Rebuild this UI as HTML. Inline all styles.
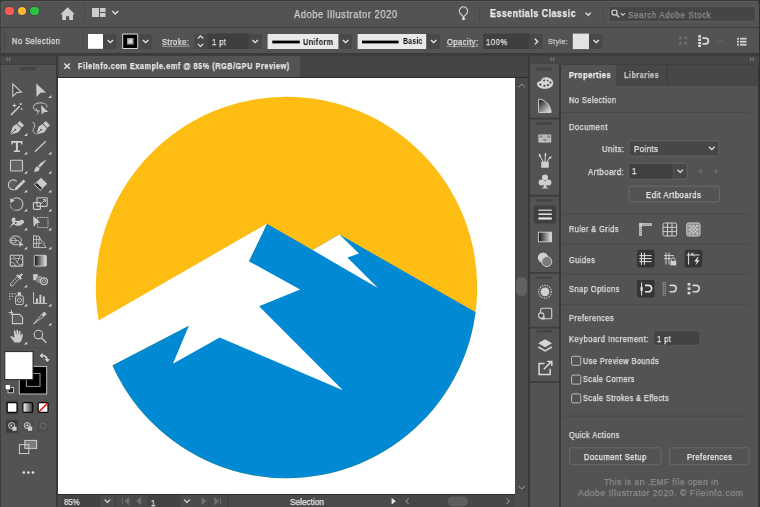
<!DOCTYPE html>
<html><head><meta charset="utf-8">
<style>
*{box-sizing:border-box;margin:0;padding:0}
html,body{width:760px;height:507px;overflow:hidden}
body{position:relative;background:#393939;font-family:"Liberation Sans",sans-serif;color:#d4d4d4}
.a{position:absolute}
.t{position:absolute;white-space:nowrap;line-height:1;will-change:transform;-webkit-text-stroke:0.25px currentColor}
svg{position:absolute;overflow:visible}
</style></head><body>
<!-- title bar -->
<div class="a" style="left:1px;top:1px;width:758px;height:26px;background:#535353;border-top-left-radius:4px;border-top-right-radius:4px;box-shadow:inset 1px 1px 0 #5d5d5d"></div>
<div class="a" style="left:0;top:27px;width:760px;height:1px;background:#3d3d3d"></div>

<!-- traffic lights -->
<div class="a" style="left:5px;top:6.6px;width:8.8px;height:8.8px;border-radius:50%;background:#fd5b53;box-shadow:0 0 0 0.6px #3f4f4f"></div>
<div class="a" style="left:17.6px;top:6.6px;width:8.8px;height:8.8px;border-radius:50%;background:#fdbb2b;box-shadow:0 0 0 0.6px #3c4560"></div>
<div class="a" style="left:30.2px;top:6.6px;width:8.8px;height:8.8px;border-radius:50%;background:#28c63e;box-shadow:0 0 0 0.6px #4a3f55"></div>
<!-- home -->
<svg style="left:0;top:0" width="760" height="28">
<path d="M60.5 14.2 L67.6 7.2 L74.8 14.2 L73 14.2 L73 20 L69.2 20 L69.2 16.2 L66 16.2 L66 20 L62.2 20 L62.2 14.2 Z" fill="#cdcdcd"/>
<rect x="84" y="5" width="1" height="16" fill="#484848"/>
<rect x="92" y="8" width="7" height="9" fill="#cdcdcd"/>
<rect x="100" y="8" width="5.5" height="4" fill="#cdcdcd"/>
<rect x="100" y="13" width="5.5" height="4" fill="#cdcdcd"/>
<path d="M112.3 11 L115.3 14 L118.3 11" stroke="#e0e0e0" stroke-width="1.3" fill="none"/>
<path d="M463.5 16.9 L460.6 13.9 A4.1 4.1 0 1 1 466.4 13.9 Z" stroke="#d2d2d2" stroke-width="1.25" fill="none" stroke-linejoin="round"/>
<circle cx="463.5" cy="18.6" r="1.6" fill="#dadada"/>
<rect x="479" y="6" width="1" height="15" fill="#484848"/>
<path d="M585.5 12.6 L588.2 15.3 L590.9 12.6" stroke="#e6e6e6" stroke-width="1.3" fill="none"/>
<rect x="603" y="6" width="1" height="15" fill="#484848"/>
<rect x="608.9" y="6.4" width="146.6" height="15" rx="2.5" fill="#454545" stroke="#5c5c5c" stroke-width="1"/>
<circle cx="614.5" cy="12.6" r="2.6" stroke="#d6d6d6" stroke-width="1.2" fill="none"/>
<path d="M616.4 14.5 L619.2 17.3" stroke="#d6d6d6" stroke-width="1.4"/>
<path d="M620.8 13.2 L622.9 15.3 L625 13.2" stroke="#d6d6d6" stroke-width="1.1" fill="none"/>
</svg>
<div class="t" style="left:294px;top:8.7px;font-size:10.6px;color:#d2d2d2;letter-spacing:0.64px;transform:scaleX(0.88);transform-origin:0 0">Adobe Illustrator 2020</div>
<div class="t" style="left:489.8px;top:8.1px;font-size:10.8px;font-weight:bold;color:#ebebeb;letter-spacing:0.6px;transform:scaleX(0.82);transform-origin:0 0">Essentials Classic</div>
<div class="t" style="left:628px;top:10.5px;font-size:9.2px;color:#8e8e8e;letter-spacing:0.63px;transform:scaleX(0.88);transform-origin:0 0">Search Adobe Stock</div>

<!-- control bar -->
<div class="a" style="left:0;top:28px;width:760px;height:25px;background:#535353"></div>
<div class="a" style="left:0;top:53.5px;width:760px;height:2px;background:#3d3d3d"></div>

<svg style="left:0;top:0" width="760" height="56">
<!-- grip -->
<path d="M4.5 33 V48.5" stroke="#464646" stroke-width="1.4" stroke-dasharray="1 0.5"/>
<rect x="83" y="31" width="0.8" height="20" fill="#4c4c4c"/>
<!-- fill swatch group -->
<rect x="87.2" y="33.2" width="30" height="16.2" rx="2" fill="#484848" stroke="#585858" stroke-width="0.7"/>
<rect x="88" y="34" width="15" height="14.8" fill="#ffffff"/>
<path d="M107.6 40 L110.3 42.7 L113 40" stroke="#ececec" stroke-width="1.3" fill="none"/>
<!-- stroke swatch group -->
<rect x="121.6" y="33.2" width="30.6" height="16.2" rx="2" fill="#484848" stroke="#585858" stroke-width="0.7"/>
<rect x="122.2" y="33.6" width="16" height="15.4" rx="1" fill="#d8d8d8"/>
<rect x="123.2" y="34.6" width="14" height="13.4" fill="#000"/>
<rect x="127" y="38" width="6.6" height="6.6" fill="#9a9a9a"/>
<rect x="128.3" y="39.3" width="4" height="4" fill="#d8d8d8"/>
<g fill="#8a8a8a"><rect x="127.4" y="38.4" width="1" height="1"/><rect x="132.2" y="38.4" width="1" height="1"/><rect x="127.4" y="43.2" width="1" height="1"/><rect x="132.2" y="43.2" width="1" height="1"/></g>
<path d="M143 40 L145.7 42.7 L148.4 40" stroke="#ececec" stroke-width="1.3" fill="none"/>
<!-- stroke label underline -->
<path d="M162 46.4 H189.5" stroke="#a8a8a8" stroke-width="0.8"/>
<!-- stroke weight group -->
<rect x="193.7" y="33.2" width="68.9" height="16.3" rx="2" fill="#484848" stroke="#5a5a5a" stroke-width="0.7"/>
<path d="M197.8 38.5 L200.5 35.8 L203.2 38.5 M197.8 43.8 L200.5 46.5 L203.2 43.8" stroke="#e6e6e6" stroke-width="1.1" fill="none"/>
<rect x="207.4" y="33.6" width="41" height="15.5" fill="#3f3f3f"/>
<path d="M252.5 40 L255.2 42.7 L257.9 40" stroke="#ececec" stroke-width="1.3" fill="none"/>
<!-- uniform -->
<rect x="267.2" y="33.2" width="85.6" height="16.3" rx="2" fill="#484848" stroke="#5a5a5a" stroke-width="0.7"/>
<rect x="267.6" y="34" width="70.8" height="15" fill="#e9e9e9"/>
<rect x="272.3" y="40.6" width="27.5" height="2.8" fill="#000"/>
<path d="M343 40 L345.7 42.7 L348.4 40" stroke="#ececec" stroke-width="1.3" fill="none"/>
<!-- basic -->
<rect x="357.2" y="33.2" width="83.2" height="16.3" rx="2" fill="#484848" stroke="#5a5a5a" stroke-width="0.7"/>
<rect x="357.6" y="34" width="68.6" height="15" fill="#e9e9e9"/>
<rect x="362" y="40.6" width="36.6" height="2.8" fill="#000"/>
<path d="M431 40 L433.7 42.7 L436.4 40" stroke="#ececec" stroke-width="1.3" fill="none"/>
<path d="M446.5 46.4 H478" stroke="#a8a8a8" stroke-width="0.8"/>
<!-- opacity group -->
<rect x="482.6" y="33.2" width="60.6" height="16.3" rx="2" fill="#484848" stroke="#5a5a5a" stroke-width="0.7"/>
<rect x="483" y="33.6" width="46" height="15.5" fill="#3f3f3f"/>
<path d="M534.8 38.8 L537.6 41.6 L534.8 44.4" stroke="#ececec" stroke-width="1.3" fill="none"/>
<!-- style -->
<rect x="572.4" y="33.2" width="30.8" height="16.3" rx="2" fill="#484848" stroke="#5a5a5a" stroke-width="0.7"/>
<rect x="572.8" y="33.6" width="16.2" height="15.5" fill="#e3e3e3"/>
<path d="M593.5 40 L596.2 42.7 L598.9 40" stroke="#ececec" stroke-width="1.3" fill="none"/>
<!-- dim grid -->
<g fill="#6c6c6c"><circle cx="680.4" cy="37.9" r="1.6"/><circle cx="685.7" cy="37.9" r="1.6"/><circle cx="680.4" cy="43.2" r="1.6"/><circle cx="685.7" cy="43.2" r="1.6"/></g>
<!-- magnet -->
<g fill="#d9d9d9"><rect x="698.2" y="35.2" width="2.8" height="2.4"/><rect x="698.2" y="38.6" width="2.8" height="2.4"/><rect x="698.2" y="42" width="2.8" height="2.4"/><rect x="698.2" y="45" width="2.8" height="2"/></g>
<path d="M702.4 38.2 H705.6 A2.8 2.8 0 0 1 705.6 43.8 H702.4" stroke="#d9d9d9" stroke-width="1.7" fill="none"/>
<path d="M715.8 40 L718.6 42.8 L721.4 40" stroke="#6f6f6f" stroke-width="1" fill="none"/>
<!-- list -->
<g fill="#d0d0d0"><rect x="737" y="37.8" width="2" height="1.8"/><rect x="740" y="37.8" width="6.5" height="1.8"/><rect x="737" y="40.8" width="2" height="1.8"/><rect x="740" y="40.8" width="6.5" height="1.8"/><rect x="737" y="43.8" width="2" height="1.8"/><rect x="740" y="43.8" width="6.5" height="1.8"/></g>
</svg>
<div class="t" style="left:12px;top:37px;font-size:8.5px;color:#e0e0e0;letter-spacing:0.55px;transform:scaleX(0.88);transform-origin:0 0">No Selection</div>
<div class="t" style="left:162px;top:37.5px;font-size:8.6px;color:#e4e4e4;letter-spacing:0.53px;transform:scaleX(0.88);transform-origin:0 0">Stroke:</div>
<div class="t" style="left:211.5px;top:37.5px;font-size:8.6px;color:#e6e6e6;letter-spacing:0.49px;transform:scaleX(0.88);transform-origin:0 0">1 pt</div>
<div class="t" style="left:303px;top:37.5px;font-size:8.3px;font-weight:bold;color:#111;-webkit-text-stroke:0;letter-spacing:0.4px;transform:scaleX(0.88);transform-origin:0 0">Uniform</div>
<div class="t" style="left:402.8px;top:37.4px;font-size:8.5px;font-weight:bold;color:#111;-webkit-text-stroke:0;letter-spacing:0.2px;transform:scaleX(0.82);transform-origin:0 0">Basic</div>
<div class="t" style="left:446.5px;top:37.5px;font-size:8.6px;color:#e4e4e4;letter-spacing:0.54px;transform:scaleX(0.88);transform-origin:0 0">Opacity:</div>
<div class="t" style="left:486px;top:37.5px;font-size:8.6px;color:#e6e6e6;letter-spacing:0.75px;transform:scaleX(0.88);transform-origin:0 0">100%</div>
<div class="t" style="left:548px;top:37.5px;font-size:8px;color:#cfcfcf;letter-spacing:0.45px;transform:scaleX(0.88);transform-origin:0 0">Style:</div>

<!-- toolbar -->
<div class="a" style="left:1px;top:55.5px;width:55px;height:8px;background:#474747"></div><div class="a" style="left:1px;top:63.5px;width:55px;height:1.2px;background:#3f3f3f"></div>
<div class="a" style="left:1px;top:64.7px;width:55px;height:443px;background:#535353"></div>

<svg style="left:0;top:0" width="60" height="507">
<!-- header -->
<path d="M7.8 57.9 L6.2 59.4 L7.8 60.9 M10.4 57.9 L8.8 59.4 L10.4 60.9" stroke="#b4b4b4" stroke-width="0.7" fill="none"/>
<rect x="19.8" y="67" width="16" height="3.4" fill="#444444"/>
<!-- selection -->
<path d="M12.8 84 L21.4 92 L16.7 92.6 L12.8 96.3 Z" stroke="#cbcbcb" stroke-width="1.1" fill="#4a4a4a" stroke-linejoin="miter"/>
<path d="M36.2 83.4 L46 92.4 L40.4 92.8 L36.5 97 Z" fill="#cbcbcb"/>
<path d="M51.400000000000006 95 L51.400000000000006 98 L48.2 98 Z" fill="#d0d0d0"/>
<!-- magic wand -->
<path d="M11 115 L19.6 106.2" stroke="#cbcbcb" stroke-width="1.6"/>
<path d="M14.4 103.6 V107.4 M12.5 105.5 H16.3" stroke="#cbcbcb" stroke-width="1"/>
<circle cx="20.7" cy="104" r="1.1" fill="#cbcbcb"/>
<circle cx="21.6" cy="108.9" r="0.9" fill="#cbcbcb"/>
<!-- lasso -->
<path d="M40 111 C34 111 32.8 107.8 33.6 106 C34.6 103.4 39 102.4 42.4 103 C46 103.6 47.8 105.6 46.6 107.4" stroke="#cbcbcb" stroke-width="1" fill="none"/>
<path d="M37.4 108 C35.8 108.6 35.8 111 37.6 111.4 C38.6 111.6 38.2 113.5 37 114.5" stroke="#cbcbcb" stroke-width="0.9" fill="none"/>
<path d="M41 105 L48.2 112 L44.5 112 L41.7 114.6 Z" fill="#cbcbcb"/>
<!-- pen -->
<g transform="translate(16.6,128.4) rotate(45)">
<path d="M-3.2 -3 L3.2 -3 L4 1.5 L0 9 L-4 1.5 Z" fill="#cbcbcb"/>
<path d="M0 1.5 V9" stroke="#535353" stroke-width="0.8"/>
<circle cx="0" cy="1.8" r="0.9" fill="#535353"/>
<rect x="-3" y="-7.5" width="6" height="3.6" fill="#cbcbcb"/>
</g>
<path d="M27.3 133 L27.3 136 L24.1 136 Z" fill="#d0d0d0"/>
<!-- curvature pen -->
<g transform="translate(42.5,128.4) rotate(45)">
<path d="M-3.2 -3 L3.2 -3 L4 1.5 L0 9 L-4 1.5 Z" fill="#cbcbcb"/>
<path d="M0 1.5 V9" stroke="#535353" stroke-width="0.8"/>
<circle cx="0" cy="1.8" r="0.9" fill="#535353"/>
<rect x="-3" y="-7.5" width="6" height="3.6" fill="#cbcbcb"/>
</g>
<path d="M32.6 122.3 C35 123 35.5 125 34 127.5 C32.4 130 33 133 35.6 134" stroke="#cbcbcb" stroke-width="0.9" fill="none"/>
<!-- type -->
<path d="M11.2 141 H22.5 V144.6 H21.4 L20.8 142.7 H17.9 V150.5 H20 V152.1 H13.8 V150.5 H15.9 V142.7 H12.9 L12.3 144.6 H11.2 Z" fill="#cfcfcf"/>
<path d="M27.2 151.6 L27.2 154.6 L24 154.6 Z" fill="#d0d0d0"/>
<!-- line -->
<path d="M34.8 151.8 L45.8 141.2" stroke="#cbcbcb" stroke-width="1.3"/>
<path d="M51.400000000000006 151.6 L51.400000000000006 154.6 L48.2 154.6 Z" fill="#d0d0d0"/>
<!-- rect -->
<rect x="10.5" y="160.2" width="12" height="10.8" rx="0.8" fill="#626262" stroke="#cbcbcb" stroke-width="1.1"/>
<path d="M27.2 170.8 L27.2 173.8 L24 173.8 Z" fill="#d0d0d0"/>
<!-- brush -->
<path d="M46.6 159.6 L41.6 165.2 L40.2 163.8 Z" fill="#cbcbcb"/>
<path d="M46.6 159.6 L41.8 165.6 L39.6 167.4 L38.2 166 L40.2 163.6 Z" fill="#cbcbcb"/>
<path d="M37.6 166.6 C35.2 166.8 34.6 169.6 34.2 172 C36.8 172 39.6 171 39.6 168.6 Z" fill="#cbcbcb"/>
<path d="M51.400000000000006 170.8 L51.400000000000006 173.8 L48.2 173.8 Z" fill="#d0d0d0"/>
<!-- shaper -->
<path d="M16.8 181.4 A4.9 4.9 0 1 0 14.2 189.6" stroke="#cbcbcb" stroke-width="1.1" fill="#5e5e5e"/>
<path d="M14.4 190.8 L15.4 187.6 L23.6 179.6 L25.4 181.4 L17.4 189.6 Z" fill="#cbcbcb"/>
<path d="M27.2 189.6 L27.2 192.6 L24 192.6 Z" fill="#d0d0d0"/>
<!-- eraser -->
<path d="M41 177.7 L47.2 183.8 L40.4 190.8 L34 184.6 Z" fill="#cbcbcb"/>
<path d="M34.6 184.6 L40.4 190.2 L42.5 188.1 L36.7 182.5 Z" fill="#2e2e2e" stroke="#cbcbcb" stroke-width="0.9"/>
<path d="M51.400000000000006 189.6 L51.400000000000006 192.6 L48.2 192.6 Z" fill="#d0d0d0"/>
<!-- rotate -->
<path d="M11.2 201 A6.2 6.2 0 1 1 16.2 210.2" stroke="#cbcbcb" stroke-width="1.1" fill="none"/>
<path d="M16.2 210.2 A6.2 6.2 0 0 1 10 204" stroke="#cbcbcb" stroke-width="1.1" fill="none" stroke-dasharray="0.9 0.9"/>
<path d="M10 198.3 L14.6 200.5 L10.6 203.2 Z" fill="#cbcbcb"/>
<path d="M27.2 208.6 L27.2 211.6 L24 211.6 Z" fill="#d0d0d0"/>
<!-- scale -->
<rect x="37" y="197.8" width="10.2" height="8.6" rx="0.8" stroke="#cbcbcb" stroke-width="1.1" fill="none"/>
<rect x="33.4" y="202.6" width="7" height="6.8" rx="0.8" stroke="#cbcbcb" stroke-width="1.1" fill="none"/>
<path d="M40.5 204.5 L45.3 199.7 M42.8 199.6 H45.4 V202.2" stroke="#cbcbcb" stroke-width="0.9" fill="none"/>
<path d="M51.400000000000006 208.6 L51.400000000000006 211.6 L48.2 211.6 Z" fill="#d0d0d0"/>
<!-- puppet warp -->
<path d="M12.2 218 C14.6 216.6 16.6 218.6 15 220.6 C17.8 221.6 20.2 220.8 22 219.6 C24.4 220.8 24.8 223.4 22.8 223.6 C21.8 224.6 20.6 225.6 18.8 225.8 C16.6 226 14.8 225 13.4 224.2 C11.4 225.8 10 227.6 9.6 228.6 C10.4 226.6 11.4 224.4 12.8 222.8 C11.6 221.4 11.2 219.4 12.2 218 Z" fill="#cbcbcb"/>
<circle cx="15.8" cy="223" r="0.9" fill="#535353"/>
<path d="M27.2 227.6 L27.2 230.6 L24 230.6 Z" fill="#d0d0d0"/>
<!-- free transform -->
<rect x="37.6" y="217.4" width="10.4" height="10.2" stroke="#cbcbcb" stroke-width="1" fill="none" stroke-dasharray="1.2 0.8"/>
<path d="M33.2 216 L40.4 222.6 L37.2 222.8 L33.6 227 Z" fill="#cbcbcb"/>
<path d="M51.400000000000006 227.6 L51.400000000000006 230.6 L48.2 230.6 Z" fill="#d0d0d0"/>
<!-- shape builder -->
<ellipse cx="15.6" cy="240.4" rx="5.8" ry="4.5" stroke="#cbcbcb" stroke-width="1" fill="none"/>
<circle cx="13.6" cy="240.6" r="2.6" stroke="#cbcbcb" stroke-width="0.9" fill="none"/>
<path d="M10.2 240.6 H19" stroke="#cbcbcb" stroke-width="0.8"/>
<path d="M18.8 240.4 L24.4 245.4 L21.4 245.6 L19.3 247.8 Z" fill="#cfcfcf" stroke="#535353" stroke-width="0.5"/>
<path d="M27.2 246.6 L27.2 249.6 L24 249.6 Z" fill="#d0d0d0"/>
<!-- perspective grid -->
<path d="M33.5 235.6 L39 236.4 L42.6 243 L46.2 247.6 H33.5 Z" stroke="#cbcbcb" stroke-width="0.9" fill="none"/>
<path d="M33.5 239.6 H40.4 M33.5 243.4 H42.6 M36.4 235.8 V247.6 M39.4 236.6 L38.6 247.6" stroke="#cbcbcb" stroke-width="0.8" fill="none"/>
<path d="M40.6 244 L46.2 244 L42.8 240" fill="#7a7a7a"/>
<path d="M51.400000000000006 246.6 L51.400000000000006 249.6 L48.2 249.6 Z" fill="#d0d0d0"/>
<!-- mesh -->
<rect x="10.3" y="255.3" width="12.4" height="10.8" rx="0.8" stroke="#cbcbcb" stroke-width="1.1" fill="#4e4e4e"/>
<path d="M10.8 259 C14 258 16 259.6 17 262 C18 264.6 20 265 22.6 264.2 M13.4 255.4 C13.8 258 15.6 259 18.6 258.4 C20.6 258 21.8 259.2 22.6 260.4 M10.6 262.6 C13 261.8 14.6 263 15.4 266 M19.8 255.6 C19.2 258 18.6 260.6 16.6 262.4" stroke="#cbcbcb" stroke-width="0.8" fill="none"/>
<!-- gradient -->
<defs><linearGradient id="gr1" x1="0" x2="1"><stop offset="0" stop-color="#111"/><stop offset="1" stop-color="#e8e8e8"/></linearGradient>
<linearGradient id="gr2" x1="0" x2="1"><stop offset="0" stop-color="#fff"/><stop offset="1" stop-color="#333"/></linearGradient></defs>
<rect x="34.3" y="255.3" width="12" height="10.8" rx="0.8" stroke="#c8c8c8" stroke-width="1" fill="url(#gr1)"/>
<!-- eyedropper -->
<path d="M10.6 285.8 L10.4 284 L17.6 276.4 L19.6 278.4 L12.2 286 Z" stroke="#cbcbcb" stroke-width="0.9" fill="#505050"/>
<path d="M16.2 275.6 L20.6 279.8 L22 278.4 L20.6 277 L23 274.6 L21.6 273.2 L19.2 275.6 L17.6 274.2 Z" fill="#cbcbcb"/>
<path d="M27.2 284.6 L27.2 287.6 L24 287.6 Z" fill="#d0d0d0"/>
<!-- blend -->
<rect x="33.2" y="274.2" width="4.6" height="6" fill="#cbcbcb"/>
<circle cx="39.6" cy="279.4" r="3.6" fill="#8a8a8a"/>
<circle cx="44" cy="281.2" r="3.4" stroke="#cbcbcb" stroke-width="1.2" fill="#535353"/>
<circle cx="44" cy="281.2" r="1.6" stroke="#cbcbcb" stroke-width="0.8" fill="none"/>
<!-- symbol sprayer -->
<g fill="#cbcbcb"><rect x="9.2" y="293.2" width="1.2" height="1.2"/><rect x="11.8" y="293.2" width="1.2" height="1.2"/><rect x="14.4" y="293.2" width="1.2" height="1.2"/><rect x="9.2" y="295.8" width="1.2" height="1.2"/><rect x="11.8" y="295.8" width="1.2" height="1.2"/><rect x="9.2" y="298.4" width="1.2" height="1.2"/></g>
<rect x="15.6" y="295.8" width="7.6" height="8.8" rx="1.4" stroke="#cbcbcb" stroke-width="1" fill="none"/>
<rect x="17.6" y="292.2" width="3.4" height="3" fill="#cbcbcb"/>
<circle cx="19.4" cy="300.2" r="2" stroke="#cbcbcb" stroke-width="0.9" fill="none"/>
<path d="M27.2 303.6 L27.2 306.6 L24 306.6 Z" fill="#d0d0d0"/>
<!-- column graph -->
<path d="M33.6 292.2 V303.4 H47.2" stroke="#cbcbcb" stroke-width="1" fill="none"/>
<rect x="36" y="298.4" width="2" height="4.6" fill="#cbcbcb"/>
<rect x="39.4" y="294.8" width="2" height="8.2" fill="#cbcbcb"/>
<rect x="42.8" y="296.4" width="2" height="6.6" fill="#cbcbcb"/>
<path d="M51.400000000000006 303.6 L51.400000000000006 306.6 L48.2 306.6 Z" fill="#d0d0d0"/>
<!-- artboard -->
<path d="M8.6 312.6 H13 M11.4 310 V315" stroke="#cbcbcb" stroke-width="1" fill="none"/>
<path d="M12.4 314.4 H19.6 L22.6 317.4 V323.6 H12.4 Z" stroke="#cbcbcb" stroke-width="1.1" fill="#5e5e5e"/>
<!-- slice -->
<path d="M33.4 324 L41.6 314.6 L43.6 316.6 Z" stroke="#cbcbcb" stroke-width="0.9" fill="none"/>
<path d="M41.6 314.6 L44.2 311.6 L46.6 314 L43.8 316.8 Z" fill="#cbcbcb"/>
<path d="M51.400000000000006 322.6 L51.400000000000006 325.6 L48.2 325.6 Z" fill="#d0d0d0"/>
<!-- hand -->
<path d="M12.6 336.8 C11.4 335.6 10 335.6 10.4 337 L14.6 342.6 H20 C22 340.6 22.6 337 22.8 334.4 C22.8 333.4 21.4 333.4 21.2 334.4 L20.6 336.6 L20.4 331.6 C20.4 330.6 19 330.6 18.8 331.6 L18.6 335.6 L18 330.4 C17.8 329.4 16.4 329.4 16.4 330.4 L16.4 335.6 L15.4 331 C15.2 330 13.8 330.2 13.8 331.2 L14.4 337.6 Z" fill="#cbcbcb"/>
<path d="M27.2 341.6 L27.2 344.6 L24 344.6 Z" fill="#d0d0d0"/>
<!-- zoom -->
<circle cx="38.4" cy="334.6" r="4.3" stroke="#cbcbcb" stroke-width="1.1" fill="none"/>
<path d="M41.4 337.8 L46.4 342.8" stroke="#cbcbcb" stroke-width="1.4"/>
<!-- separator -->
<rect x="4" y="347.6" width="49" height="1" fill="#4e4e4e"/>
<!-- stroke swatch -->
<rect x="19.3" y="366.4" width="27.4" height="27.6" fill="#000" stroke="#bdbdbd" stroke-width="1"/>
<rect x="26.4" y="373.4" width="13.6" height="13" fill="none" stroke="#9a9a9a" stroke-width="1"/>
<!-- fill swatch -->
<rect x="4.8" y="351.6" width="28.2" height="28" fill="#fff" stroke="#2a2a2a" stroke-width="1"/>
<!-- swap -->
<path d="M41.6 355.6 C44.6 355.2 47 357 47.2 359.8" stroke="#d6d6d6" stroke-width="1.6" fill="none"/>
<path d="M39.6 355.8 L42.6 352.8 L42.8 358.4 Z M47.4 362 L44.4 359 L50 359.2 Z" fill="#d6d6d6"/>
<!-- default -->
<rect x="8" y="387.4" width="5.4" height="5.4" fill="#1f1f1f" stroke="#d0d0d0" stroke-width="0.9"/>
<rect x="5.2" y="384.6" width="5.2" height="5.2" fill="#fff" stroke="#2a2a2a" stroke-width="0.6"/>
<!-- color mode row -->
<rect x="5.6" y="400.2" width="13" height="14.6" rx="1.5" fill="#3e3e3e" stroke="#575757" stroke-width="0.7"/>
<rect x="21" y="400.2" width="13.6" height="14.6" rx="1.5" fill="#4f4f4f" stroke="#5a5a5a" stroke-width="0.7"/>
<rect x="36.4" y="400.2" width="13.4" height="14.6" rx="1.5" fill="#4f4f4f" stroke="#5a5a5a" stroke-width="0.7"/>
<rect x="7.2" y="402.6" width="9.8" height="9.8" rx="1.2" fill="#fff" stroke="#0a0a0a" stroke-width="1.2"/>
<rect x="22.9" y="402.6" width="9.8" height="9.8" rx="1.2" fill="url(#gr2)" stroke="#0a0a0a" stroke-width="1.2"/>
<rect x="38.2" y="402.6" width="9.8" height="9.8" rx="1.2" fill="#fff" stroke="#0a0a0a" stroke-width="1.2"/>
<path d="M39 411.8 L47.4 403.4" stroke="#ff1010" stroke-width="1.6"/>
<!-- draw modes -->
<rect x="5.6" y="419.4" width="13" height="13.8" rx="1.5" fill="#3c3c3c" stroke="#575757" stroke-width="0.7"/>
<rect x="21" y="419.4" width="13.6" height="13.8" rx="1.5" fill="#4f4f4f" stroke="#5a5a5a" stroke-width="0.7"/>
<rect x="36.4" y="419.4" width="13.4" height="13.8" rx="1.5" fill="#4f4f4f" stroke="#5a5a5a" stroke-width="0.7"/>
<circle cx="11.6" cy="425.6" r="3" stroke="#d4d4d4" stroke-width="1" fill="none"/>
<circle cx="11.2" cy="425.4" r="1" fill="#d4d4d4"/>
<rect x="12.4" y="426.6" width="4.2" height="4.2" fill="#cfcfcf"/>
<circle cx="27.2" cy="425.6" r="3" stroke="#d4d4d4" stroke-width="1" fill="none"/>
<path d="M27.2 423.6 V427.6 M25.2 425.6 H29.2" stroke="#d4d4d4" stroke-width="0.7"/>
<rect x="28" y="426.6" width="4.2" height="4.2" fill="#cfcfcf"/>
<circle cx="43.1" cy="426" r="3" stroke="#6e6e6e" stroke-width="0.9" fill="none"/>
<!-- screen mode -->
<rect x="24.8" y="440.4" width="11.8" height="8" fill="#7a7a7a" stroke="#cfcfcf" stroke-width="1"/>
<rect x="19.4" y="444.6" width="9.4" height="9" fill="none" stroke="#cfcfcf" stroke-width="1"/>
<!-- dots -->
<circle cx="23.8" cy="472.6" r="1.35" fill="#dcdcdc"/><circle cx="28.4" cy="472.6" r="1.35" fill="#dcdcdc"/><circle cx="33" cy="472.6" r="1.35" fill="#dcdcdc"/>
</svg>

<!-- tab bar -->
<div class="a" style="left:58px;top:55.5px;width:469.5px;height:21.5px;background:#454545"></div>
<div class="a" style="left:58px;top:55.5px;width:242px;height:21.5px;background:#535353;box-shadow:inset 1px 0 0 #4a4a4a"></div>
<div class="a" style="left:58px;top:76.6px;width:469.5px;height:1.4px;background:#2c2c2c"></div>
<!-- canvas -->
<div class="a" style="left:58px;top:78px;width:457px;height:416px;background:#ffffff"></div>
<!-- v scrollbar bg -->
<div class="a" style="left:515px;top:78px;width:13px;height:416px;background:#4a4a4a"></div>

<!-- tab content -->
<svg style="left:0;top:0" width="760" height="507">
<path d="M64.3 63.5 L69.9 68.7 M69.9 63.5 L64.3 68.7" stroke="#e6e6e6" stroke-width="1.4"/>
<!-- artwork -->
<defs><clipPath id="circ"><circle cx="286.5" cy="287.5" r="190.7"/></clipPath></defs>
<g clip-path="url(#circ)">
<rect x="90" y="90" width="400" height="400" fill="#fdbd12"/>
<path d="M60 392.5 L189 325.5 L248.8 261.2 L266.9 223.7 L312.6 250.1 L339.4 234.6 L500 325.9 V490 H60 Z" fill="#0189d3"/>
</g>
<path d="M60 342.8 L266.9 223.7 L248.8 261.2 L300.1 289.6 L259.1 306.3 L342.9 390.2 L219.7 337.5 L172.9 363.8 L189 325.5 L60 392.5 Z" fill="#ffffff"/>
<path d="M312.6 250.1 L339.4 234.6 L359 253.6 L347.4 257.4 L377.9 287.9 Z" fill="#ffffff"/>
<!-- v scrollbar -->
<path d="M518.6 87.2 L521.7 84.1 L524.8 87.2" stroke="#a6a6a6" stroke-width="1" fill="none"/>
<rect x="516" y="277" width="11" height="19.2" rx="5.5" fill="#616161"/>
<path d="M518.6 486 L521.7 489.1 L524.8 486" stroke="#a6a6a6" stroke-width="1" fill="none"/>
</svg>

<div class="t" style="left:77.8px;top:62px;font-size:8.3px;font-weight:bold;color:#e8e8e8;letter-spacing:0.60px;transform:scaleX(0.88);transform-origin:0 0">FileInfo.com Example.emf @ 85% (RGB/GPU Preview)</div>
<!-- status bar -->
<div class="a" style="left:58px;top:494px;width:470px;height:1px;background:#2e2e2e"></div>
<div class="a" style="left:58px;top:495px;width:470px;height:12px;background:#4a4a4a"></div>

<svg style="left:0;top:0" width="760" height="507">
<rect x="62" y="495.4" width="38.5" height="11.6" fill="#434343"/>
<rect x="100.5" y="495" width="14" height="12" fill="#4d4d4d"/>
<path d="M104.6 499.6 L107.4 502.4 L110.2 499.6" stroke="#e0e0e0" stroke-width="1.2" fill="none"/>
<rect x="114.5" y="495" width="1" height="12" fill="#3e3e3e"/>
<path d="M122.4 497.6 V504.6 M128.8 497.6 L125 501.1 L128.8 504.6 Z M140.6 497.6 L136.8 501.1 L140.6 504.6 Z" stroke="#6f6f6f" stroke-width="1" fill="#6f6f6f"/>
<rect x="147.6" y="495" width="33" height="12" fill="#434343"/>
<rect x="180.6" y="495" width="12" height="12" fill="#4d4d4d"/>
<path d="M184.2 499.6 L187 502.4 L189.8 499.6" stroke="#e0e0e0" stroke-width="1.2" fill="none"/>
<path d="M202 497.6 L205.8 501.1 L202 504.6 Z M214.8 497.6 L218.6 501.1 L214.8 504.6 Z M220.4 497.6 V504.6" stroke="#6f6f6f" stroke-width="1" fill="#6f6f6f"/>
<rect x="227.2" y="495" width="1" height="12" fill="#3e3e3e"/>
<path d="M391.6 497.8 L395.8 501.2 L391.6 504.6 Z" fill="#e8e8e8"/>
<rect x="400" y="495" width="115" height="12" fill="#474747"/>
<path d="M408.6 498.4 L406 501.2 L408.6 504" stroke="#a6a6a6" stroke-width="1" fill="none"/>
<rect x="447.8" y="496.4" width="20" height="10" rx="5" fill="#5e5e5e"/>
<path d="M506.6 498.4 L509.2 501.2 L506.6 504" stroke="#a6a6a6" stroke-width="1" fill="none"/>
<rect x="515" y="494" width="13" height="13" fill="#4c4c4c"/>
</svg>
<div class="t" style="left:64px;top:498.4px;font-size:9px;color:#e0e0e0;transform:scaleX(0.87);transform-origin:0 0">85%</div>
<div class="t" style="left:151.2px;top:498.6px;font-size:8.8px;color:#e6e6e6;letter-spacing:0.67px;transform:scaleX(0.88);transform-origin:0 0">1</div>
<div class="t" style="left:289.7px;top:497.8px;font-size:9px;color:#e4e4e4;transform:scaleX(0.92);transform-origin:0 0">Selection</div>

<!-- properties panel -->
<div class="a" style="left:530px;top:55.5px;width:229px;height:9px;background:#474747"></div>
<div class="a" style="left:561px;top:64px;width:197px;height:443px;background:#535353"></div>
<!-- icon column -->

<div class="a" style="left:530px;top:64px;width:29px;height:443px;background:#535353"></div>

<svg style="left:0;top:0" width="760" height="507">
<!-- group separators in icon column -->
<rect x="530" y="117.6" width="29" height="2" fill="#3e3e3e"/>
<rect x="530" y="194.8" width="29" height="2" fill="#3e3e3e"/>
<rect x="530" y="272" width="29" height="1.8" fill="#3e3e3e"/>
<rect x="530" y="326.8" width="29" height="1.8" fill="#3e3e3e"/>
<rect x="530" y="381" width="29" height="1.8" fill="#3e3e3e"/>
<g stroke="#444444" stroke-width="2.6">
<path d="M536.8 69 H552"/><path d="M536.8 123.4 H552"/><path d="M536.8 200.4 H552"/><path d="M536.8 277.6 H552"/><path d="M536.8 331.4 H552"/>
</g>
<!-- << -->
<path d="M551.8 57.9 L550.2 59.4 L551.8 60.9 M554.4 57.9 L552.8 59.4 L554.4 60.9" stroke="#b4b4b4" stroke-width="0.7" fill="none"/>
<!-- palette -->
<path d="M545.6 77.2 C550.2 77.2 553.2 79.8 553.2 83 C553.2 86.6 549.4 88.8 545 88.8 C540.2 88.8 537 86.8 537 84 C537 81.6 539.6 81.6 540.6 81 C541.6 80.4 541.4 77.2 545.6 77.2 Z" fill="#d4d4d4"/>
<g fill="#3a3a3a"><circle cx="540.4" cy="84.6" r="1.05"/><circle cx="544.4" cy="85.8" r="1.05"/><circle cx="547.9" cy="85.1" r="1.05"/><circle cx="550.4" cy="82.6" r="1"/><circle cx="547.8" cy="80.6" r="0.8"/></g>
<ellipse cx="544.2" cy="80.4" rx="1.2" ry="0.9" fill="#535353"/>
<!-- color guide quarter -->
<defs><linearGradient id="cg" x1="0" y1="0" x2="1" y2="1"><stop offset="0" stop-color="#111"/><stop offset="1" stop-color="#f2f2f2"/></linearGradient></defs>
<path d="M538.6 99 C545 99.4 550.6 105 551.2 112.4 H538.6 Z" fill="url(#cg)" stroke="#d8d8d8" stroke-width="0.9"/>
<!-- swatches -->
<rect x="538.4" y="134.4" width="12.8" height="8" rx="0.6" fill="#cfcfcf"/>
<g fill="#8c8c8c"><rect x="539.3" y="135.3" width="3.4" height="2.7"/><rect x="547.1" y="135.3" width="3.4" height="2.7"/><rect x="543.2" y="138.6" width="3.4" height="2.7"/></g>
<g fill="#b4b4b4"><rect x="543.2" y="135.3" width="3.4" height="2.7"/><rect x="539.3" y="138.6" width="3.4" height="2.7"/><rect x="547.1" y="138.6" width="3.4" height="2.7"/></g>
<!-- brushes -->
<rect x="541.2" y="161.4" width="7.6" height="6.4" rx="0.6" fill="#cfcfcf"/>
<path d="M543 161.4 L540.6 157 M545 161.4 L545.4 156 M547 161.4 L549.6 158" stroke="#cfcfcf" stroke-width="1"/>
<path d="M539.2 153.6 C538.2 155.2 539 157.2 540.8 157.6 C541.2 156 540.6 154.4 539.2 153.6 Z" fill="#d4d4d4"/>
<path d="M545.4 152.6 C544.2 154 544.4 156 545.6 156.8 C546.6 155.8 546.6 153.8 545.4 152.6 Z" fill="#d4d4d4"/>
<path d="M551.8 156.6 C550 156 548.6 157 548.8 158.6 C550.4 159 551.6 158.2 551.8 156.6 Z" fill="#d4d4d4"/>
<!-- symbols club -->
<circle cx="545" cy="177.6" r="3" fill="#cfcfcf"/>
<circle cx="541.6" cy="182.6" r="3" fill="#cfcfcf"/>
<circle cx="548.4" cy="182.6" r="3" fill="#cfcfcf"/>
<path d="M544.2 181 H545.8 L546.6 187.6 L549.4 188.6 H540.6 L543.4 187.6 Z" fill="#cfcfcf"/>
<!-- stroke selected -->
<rect x="533.8" y="205.4" width="22.2" height="18" rx="2.2" fill="#3f3f3f" stroke="#4a4a4a" stroke-width="0.6"/>
<rect x="538.4" y="209.6" width="13.4" height="1.2" fill="#e0e0e0"/>
<rect x="538.4" y="213.4" width="13.4" height="1.6" fill="#e0e0e0"/>
<rect x="538.4" y="217.4" width="13.4" height="2.2" fill="#e0e0e0"/>
<!-- gradient -->
<rect x="538.4" y="232.2" width="13.2" height="9.6" fill="url(#gr1)" stroke="#d0d0d0" stroke-width="0.9"/>
<!-- transparency -->
<circle cx="543" cy="257.6" r="5.2" fill="#cfcfcf"/>
<circle cx="546.8" cy="261.6" r="5" fill="#7a7a7a" stroke="#cfcfcf" stroke-width="1"/>
<!-- appearance -->
<circle cx="545" cy="291.8" r="6.4" fill="none" stroke="#d0d0d0" stroke-width="1.2" stroke-dasharray="1.2 1.2"/>
<circle cx="545" cy="291.8" r="4.4" fill="#d0d0d0"/>
<!-- align -->
<rect x="540.7" y="308.3" width="11" height="10.4" rx="1.2" fill="none" stroke="#d0d0d0" stroke-width="1.1"/>
<circle cx="541.2" cy="315.6" r="2.7" fill="#535353" stroke="#d0d0d0" stroke-width="1.1"/>
<circle cx="540.6" cy="315.4" r="0.9" fill="#3a3a3a"/>
<path d="M540.6 319.4 L544.6 319.4 L544.8 316.4 Z" fill="#d0d0d0"/>
<!-- layers -->
<path d="M545.1 339.2 L552 343.2 L545.1 347.2 L538.2 343.2 Z" fill="#d6d6d6"/>
<path d="M538.4 347 L545.1 351 L551.8 347" stroke="#d6d6d6" stroke-width="1.5" fill="none"/>
<!-- export -->
<path d="M544.6 363.4 H539.1 V374.4 H550.1 V368.8" stroke="#d8d8d8" stroke-width="1.5" fill="none"/>
<path d="M543.8 369.2 L551.6 361.4 M547.2 361.4 H551.8 V366" stroke="#d8d8d8" stroke-width="1.5" fill="none"/>
</svg>


<!-- properties content -->
<div class="a" style="left:561px;top:64px;width:197px;height:21.5px;background:#474747"></div>
<div class="a" style="left:561px;top:64px;width:56px;height:21.5px;background:#535353"></div>
<svg style="left:0;top:0" width="760" height="507">
<rect x="561" y="64" width="197" height="0.8" fill="#3e3e3e"/>
<path d="M617 64.5 V85.5 M666.8 64.5 V85.5" stroke="#3e3e3e" stroke-width="0.8"/>
<path d="M749.8 57.9 L751.4 59.4 L749.8 60.9 M752.4 57.9 L754 59.4 L752.4 60.9" stroke="#b4b4b4" stroke-width="0.7" fill="none"/>
<g fill="#4a4a4a">
<rect x="562" y="112" width="187" height="1"/>
<rect x="562" y="213.6" width="187" height="1"/>
<rect x="562" y="243.6" width="187" height="1"/>
<rect x="562" y="273.4" width="187" height="1"/>
<rect x="562" y="303.8" width="187" height="1"/>
<rect x="562" y="415.6" width="187" height="1"/>
</g>
<!-- units dropdown -->
<rect x="628.9" y="140.9" width="90.2" height="15.2" rx="2" fill="#474747" stroke="#646464" stroke-width="1"/>
<path d="M709 146.8 L711.8 149.6 L714.6 146.8" stroke="#e8e8e8" stroke-width="1.3" fill="none"/>
<!-- artboard -->
<rect x="628.9" y="163.3" width="58.4" height="15.8" rx="2" fill="#474747" stroke="#646464" stroke-width="1"/>
<rect x="629.4" y="163.8" width="43.6" height="14.8" fill="#404040"/><rect x="673" y="163.8" width="0.8" height="14.8" fill="#5a5a5a"/>
<path d="M677.4 169.6 L680.2 172.4 L683 169.6" stroke="#e8e8e8" stroke-width="1.3" fill="none"/>
<path d="M701.6 168.8 L698.4 171.4 L701.6 174 Z M714.8 168.8 L718 171.4 L714.8 174 Z" fill="#6c6c6c"/>
<!-- edit artboards -->
<rect x="628.9" y="186.2" width="90.6" height="15.8" rx="2.2" fill="#535353" stroke="#6e6e6e" stroke-width="0.9"/>
<!-- ruler & grids icons -->
<g fill="#d0d0d0">
<rect x="639.2" y="223.2" width="12.6" height="2.6"/>
<rect x="639.2" y="223.2" width="2.6" height="12.6"/>
</g>
<g fill="#777"><rect x="642.6" y="223.9" width="0.9" height="1.2"/><rect x="644.6" y="223.9" width="0.9" height="1.2"/><rect x="646.6" y="223.9" width="0.9" height="1.2"/><rect x="648.6" y="223.9" width="0.9" height="1.2"/><rect x="639.9" y="227.2" width="1.2" height="0.9"/><rect x="639.9" y="229.2" width="1.2" height="0.9"/><rect x="639.9" y="231.2" width="1.2" height="0.9"/><rect x="639.9" y="233.2" width="1.2" height="0.9"/></g>
<rect x="663" y="223" width="13.6" height="13" rx="1.6" fill="none" stroke="#d0d0d0" stroke-width="1"/>
<path d="M667.5 223 V236 M672 223 V236 M663 227.3 H676.6 M663 231.6 H676.6" stroke="#d0d0d0" stroke-width="1"/>
<rect x="686.8" y="223" width="13.2" height="13" rx="1.6" fill="#8a8a8a" stroke="#d0d0d0" stroke-width="1"/>
<g fill="#d0d0d0"><rect x="688.6" y="224.8" width="2" height="2"/><rect x="692.4" y="224.8" width="2" height="2"/><rect x="696.2" y="224.8" width="2" height="2"/><rect x="690.5" y="226.7" width="2" height="2"/><rect x="694.3" y="226.7" width="2" height="2"/><rect x="688.6" y="228.6" width="2" height="2"/><rect x="692.4" y="228.6" width="2" height="2"/><rect x="696.2" y="228.6" width="2" height="2"/><rect x="690.5" y="230.5" width="2" height="2"/><rect x="694.3" y="230.5" width="2" height="2"/><rect x="688.6" y="232.4" width="2" height="2"/><rect x="692.4" y="232.4" width="2" height="2"/><rect x="696.2" y="232.4" width="2" height="2"/></g>
<!-- guides -->
<rect x="637" y="249.8" width="17.6" height="17.8" rx="2" fill="#353535"/>
<path d="M641.4 252.6 V264.8 M644.4 252.6 V264.8 M639.4 255.6 H651.6 M639.4 258.6 H651.6 M639.4 261.6 H651.6" stroke="#e0e0e0" stroke-width="1"/>
<path d="M666 252.6 V264.6 M669 252.6 V264.6 M664 255.6 H674 M664 258.6 H671" stroke="#d0d0d0" stroke-width="1"/>
<rect x="670.4" y="261" width="5.8" height="4.4" fill="#d0d0d0"/>
<path d="M671.6 261 V259.4 A1.7 1.7 0 0 1 675 259.4 V261" stroke="#d0d0d0" stroke-width="0.9" fill="none"/>
<rect x="684.6" y="249.8" width="17.6" height="17.8" rx="2" fill="#353535"/>
<path d="M688.6 252.6 V264.6 M686.6 255 H699.6 M691.2 252.8 L694.4 256.4 M693.6 252.8 L691 255.4" stroke="#e0e0e0" stroke-width="1"/>
<path d="M697.6 257.2 L694.2 261.6 H696.8 L695.4 265.2 L699.6 260.2 H697 L698.8 257.2 Z" fill="#e8e8e8"/>
<!-- snap -->
<rect x="637" y="280" width="17.6" height="17.4" rx="2" fill="#353535"/>
<path d="M641.6 282.4 V295.4" stroke="#e0e0e0" stroke-width="1"/>
<rect x="640.4" y="287.2" width="2.4" height="3.6" fill="#e0e0e0"/>
<path d="M645 285.4 H648.4 A3.2 3.2 0 0 1 648.4 291.8 H645" stroke="#e8e8e8" stroke-width="1.6" fill="none"/>
<path d="M663.2 282.2 V295.6" stroke="#d0d0d0" stroke-width="0.9" stroke-dasharray="1 0.8"/>
<path d="M665.2 282.2 V295.6" stroke="#d0d0d0" stroke-width="0.9" stroke-dasharray="1 0.8"/>
<path d="M669.6 285.4 H673 A3.2 3.2 0 0 1 673 291.8 H669.6" stroke="#d8d8d8" stroke-width="1.6" fill="none"/>
<g fill="#d8d8d8"><rect x="687.6" y="283" width="2.8" height="2.6"/><rect x="687.6" y="287.4" width="2.8" height="2.6"/><rect x="687.6" y="291.8" width="2.8" height="2.6"/></g>
<path d="M692.6 285.4 H696 A3.2 3.2 0 0 1 696 291.8 H692.6" stroke="#d8d8d8" stroke-width="1.6" fill="none"/>
<!-- keyboard increment -->
<rect x="653.8" y="330.7" width="46.2" height="14.6" rx="2" fill="#424242" stroke="#5a5a5a" stroke-width="0.9"/>
<!-- checkboxes -->
<g fill="none" stroke="#bdbdbd" stroke-width="1">
<rect x="571.6" y="356.3" width="9.2" height="9" rx="1.5"/>
<rect x="571.6" y="375.1" width="9.2" height="9" rx="1.5"/>
<rect x="571.6" y="393.9" width="9.2" height="9" rx="1.5"/>
</g>
<!-- buttons -->
<rect x="569.6" y="447.8" width="91.6" height="17" rx="2.4" fill="#535353" stroke="#6e6e6e" stroke-width="0.9"/>
<rect x="669.6" y="447.8" width="79.4" height="17" rx="2.4" fill="#535353" stroke="#6e6e6e" stroke-width="0.9"/>
</svg>
<div class="t" style="left:568.5px;top:70.5px;font-size:8.5px;font-weight:bold;color:#f0f0f0;letter-spacing:0.57px;transform:scaleX(0.88);transform-origin:0 0">Properties</div>
<div class="t" style="left:623.6px;top:70.5px;font-size:8.3px;font-weight:bold;color:#c4c4c4;letter-spacing:0.53px;transform:scaleX(0.88);transform-origin:0 0">Libraries</div>
<div class="t" style="left:569px;top:95.5px;font-size:8.4px;color:#e2e2e2;letter-spacing:0.54px;transform:scaleX(0.88);transform-origin:0 0">No Selection</div>
<div class="t" style="left:569px;top:123px;font-size:8.55px;color:#e2e2e2;letter-spacing:0.66px;transform:scaleX(0.88);transform-origin:0 0">Document</div>
<div class="t" style="left:602px;top:145px;font-size:8.8px;color:#e4e4e4;letter-spacing:0.51px;transform:scaleX(0.88);transform-origin:0 0">Units:</div>
<div class="t" style="left:633.7px;top:145px;font-size:8.8px;color:#ececec;letter-spacing:0.56px;transform:scaleX(0.88);transform-origin:0 0">Points</div>
<div class="t" style="left:587.6px;top:167.5px;font-size:8.85px;color:#e4e4e4;letter-spacing:0.55px;transform:scaleX(0.88);transform-origin:0 0">Artboard:</div>
<div class="t" style="left:632px;top:167px;font-size:8.8px;color:#ececec;letter-spacing:0.67px;transform:scaleX(0.88);transform-origin:0 0">1</div>
<div class="t" style="left:646.3px;top:190.5px;font-size:8.8px;color:#ececec;letter-spacing:0.54px;transform:scaleX(0.88);transform-origin:0 0">Edit Artboards</div>
<div class="t" style="left:569px;top:225px;font-size:8.3px;color:#e2e2e2;letter-spacing:0.52px;transform:scaleX(0.88);transform-origin:0 0">Ruler &amp; Grids</div>
<div class="t" style="left:569px;top:255.5px;font-size:8.3px;color:#e2e2e2;letter-spacing:0.60px;transform:scaleX(0.88);transform-origin:0 0">Guides</div>
<div class="t" style="left:569px;top:285px;font-size:8.4px;color:#e2e2e2;letter-spacing:0.58px;transform:scaleX(0.88);transform-origin:0 0">Snap Options</div>
<div class="t" style="left:569px;top:314px;font-size:8.4px;color:#e2e2e2;letter-spacing:0.56px;transform:scaleX(0.88);transform-origin:0 0">Preferences</div>
<div class="t" style="left:569px;top:334.5px;font-size:8.6px;color:#e2e2e2;letter-spacing:0.57px;transform:scaleX(0.88);transform-origin:0 0">Keyboard Increment:</div>
<div class="t" style="left:657.4px;top:334.5px;font-size:8.6px;color:#ececec;letter-spacing:0.49px;transform:scaleX(0.88);transform-origin:0 0">1 pt</div>
<div class="t" style="left:583.2px;top:357.8px;font-size:8.2px;color:#e4e4e4;letter-spacing:0.58px;transform:scaleX(0.88);transform-origin:0 0">Use Preview Bounds</div>
<div class="t" style="left:583.2px;top:376.3px;font-size:8.2px;color:#e4e4e4;letter-spacing:0.54px;transform:scaleX(0.88);transform-origin:0 0">Scale Corners</div>
<div class="t" style="left:583.2px;top:395.3px;font-size:8.25px;color:#e4e4e4;letter-spacing:0.51px;transform:scaleX(0.88);transform-origin:0 0">Scale Strokes &amp; Effects</div>
<div class="t" style="left:569px;top:430.5px;font-size:8.4px;color:#e2e2e2;letter-spacing:0.53px;transform:scaleX(0.88);transform-origin:0 0">Quick Actions</div>
<div class="t" style="left:583.7px;top:452.5px;font-size:8.45px;color:#f0f0f0;letter-spacing:0.61px;transform:scaleX(0.88);transform-origin:0 0">Document Setup</div>
<div class="t" style="left:686.8px;top:452.5px;font-size:8.45px;color:#f0f0f0;letter-spacing:0.56px;transform:scaleX(0.88);transform-origin:0 0">Preferences</div>
<div class="t" style="left:604.2px;top:477px;font-size:9.5px;color:#8e8e8e;letter-spacing:0.56px;transform:scaleX(0.88);transform-origin:0 0">This is an .EMF file open in</div>
<div class="t" style="left:578.4px;top:488px;font-size:9.85px;color:#8e8e8e;letter-spacing:0.59px;transform:scaleX(0.88);transform-origin:0 0">Adobe Illustrator 2020. © FileInfo.com</div>
<div class="a" style="left:759px;top:0;width:1px;height:507px;background:#2f2f2f"></div>
<div class="a" style="left:0;top:0;width:1px;height:507px;background:#3e3e3e"></div>
</body></html>
